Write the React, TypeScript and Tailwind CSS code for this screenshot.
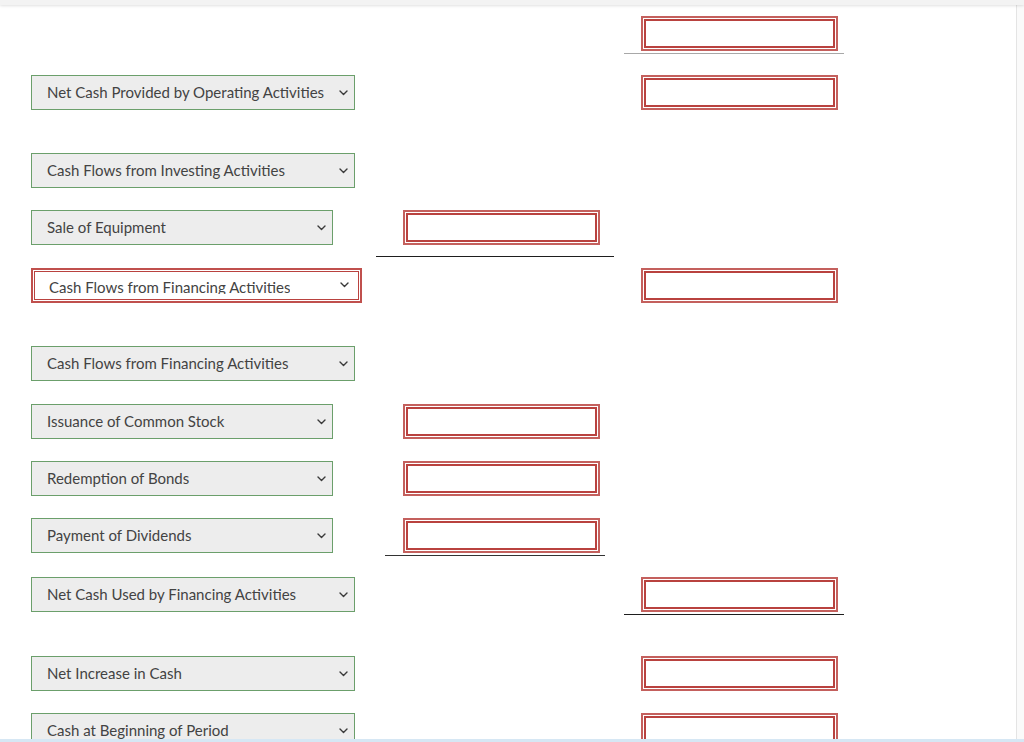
import React from "react";

const font = { fontFamily: "Lato, 'Open Sans', 'Liberation Sans', sans-serif" };

function Chevron() {
  return (
    <svg width="9" height="6" viewBox="0 0 9 6" className="shrink-0">
      <path d="M1 1l3.5 3.5L8 1" fill="none" stroke="#3a3a3a" strokeWidth="1.4" strokeLinecap="round" strokeLinejoin="round" />
    </svg>
  );
}

function Sel({ label, className }: { label: string; className: string }) {
  return (
    <div
      className={`h-[35px] flex items-center justify-between border border-[#6b9f6b] bg-[#ededed] pl-[15px] pr-[6px] text-[15px] text-[#434343] ${className}`}
    >
      <span className="whitespace-nowrap">{label}</span>
      <Chevron />
    </div>
  );
}

function RedSel({ label }: { label: string }) {
  return (
    <div className="h-[35px] w-[331px] border-2 border-[#c0504d] bg-white p-[1px]">
      <div className="h-full border border-[#b9423f] flex items-start justify-between pl-[14px] pr-[9px]">
        <div className="h-[22px] overflow-hidden pt-[5px] text-[15px] leading-[20px] text-[#434343] whitespace-nowrap">
          {label}
        </div>
        <div className="pt-[10px]">
          <Chevron />
        </div>
      </div>
    </div>
  );
}

function Box() {
  return (
    <div className="h-[35px] w-[197px] border-2 border-[#c4605d] bg-white p-[1px]">
      <div className="h-full w-full border-2 border-[#b9423f]" />
    </div>
  );
}

type Row = {
  mt: string;
  left?: React.ReactNode;
  mid?: boolean;
  midLine?: string;
  right?: boolean;
  rightLine?: string;
};

export default function App() {
  const rows: Row[] = [
    { mt: "mt-[11px]", right: true, rightLine: "mt-[2px] bg-[#a8a8a8]" },
    { mt: "mt-[24px]", left: <Sel label="Net Cash Provided by Operating Activities" className="w-[324px]" />, right: true },
    { mt: "mt-[43px]", left: <Sel label="Cash Flows from Investing Activities" className="w-[324px]" /> },
    { mt: "mt-[22px]", left: <Sel label="Sale of Equipment" className="w-[302px]" />, mid: true, midLine: "mt-[11px] ml-0 w-[238px] bg-[#1e1e1e]" },
    { mt: "mt-[23px]", left: <RedSel label="Cash Flows from Financing Activities" />, right: true },
    { mt: "mt-[43px]", left: <Sel label="Cash Flows from Financing Activities" className="w-[324px]" /> },
    { mt: "mt-[23px]", left: <Sel label="Issuance of Common Stock" className="w-[302px]" />, mid: true },
    { mt: "mt-[22px]", left: <Sel label="Redemption of Bonds" className="w-[302px]" />, mid: true },
    { mt: "mt-[22px]", left: <Sel label="Payment of Dividends" className="w-[302px]" />, mid: true, midLine: "mt-[2px] ml-[9px] w-[220px] bg-[#333333]" },
    { mt: "mt-[24px]", left: <Sel label="Net Cash Used by Financing Activities" className="w-[324px]" />, right: true, rightLine: "mt-[2px] bg-[#1e1e1e]" },
    { mt: "mt-[44px]", left: <Sel label="Net Increase in Cash" className="w-[324px]" />, right: true },
    { mt: "mt-[22px]", left: <Sel label="Cash at Beginning of Period" className="w-[324px]" />, right: true },
  ];

  return (
    <div className="h-[742px] w-[1024px] overflow-hidden bg-white flex flex-col" style={font}>
      <div className="h-[5px] shrink-0 bg-[#f3f3f3] shadow-[0_1px_3px_rgba(0,0,0,0.12)] relative z-10" />
      <div className="flex-1 flex overflow-hidden">
        <div className="w-[1017px] border-r border-[#e4e4e4] flex flex-col">
          {rows.map((r, i) => (
            <div key={i} className={`${r.mt} h-[35px] shrink-0 flex pl-[31px]`}>
              <div className="w-[345px] shrink-0">{r.left}</div>
              <div className="w-[248px] shrink-0 flex flex-col">
                {r.mid && <div className="ml-[27px]"><Box /></div>}
                {r.midLine && <div className={`h-px shrink-0 ${r.midLine}`} />}
              </div>
              <div className="w-[220px] shrink-0 flex flex-col">
                {r.right && <div className="ml-[17px]"><Box /></div>}
                {r.rightLine && <div className={`h-px w-[220px] shrink-0 ${r.rightLine}`} />}
              </div>
            </div>
          ))}
        </div>
        <div className="flex-1 bg-[#fafafa]" />
      </div>
      <div className="h-[3px] shrink-0 bg-[#d6e7f4]" />
    </div>
  );
}
